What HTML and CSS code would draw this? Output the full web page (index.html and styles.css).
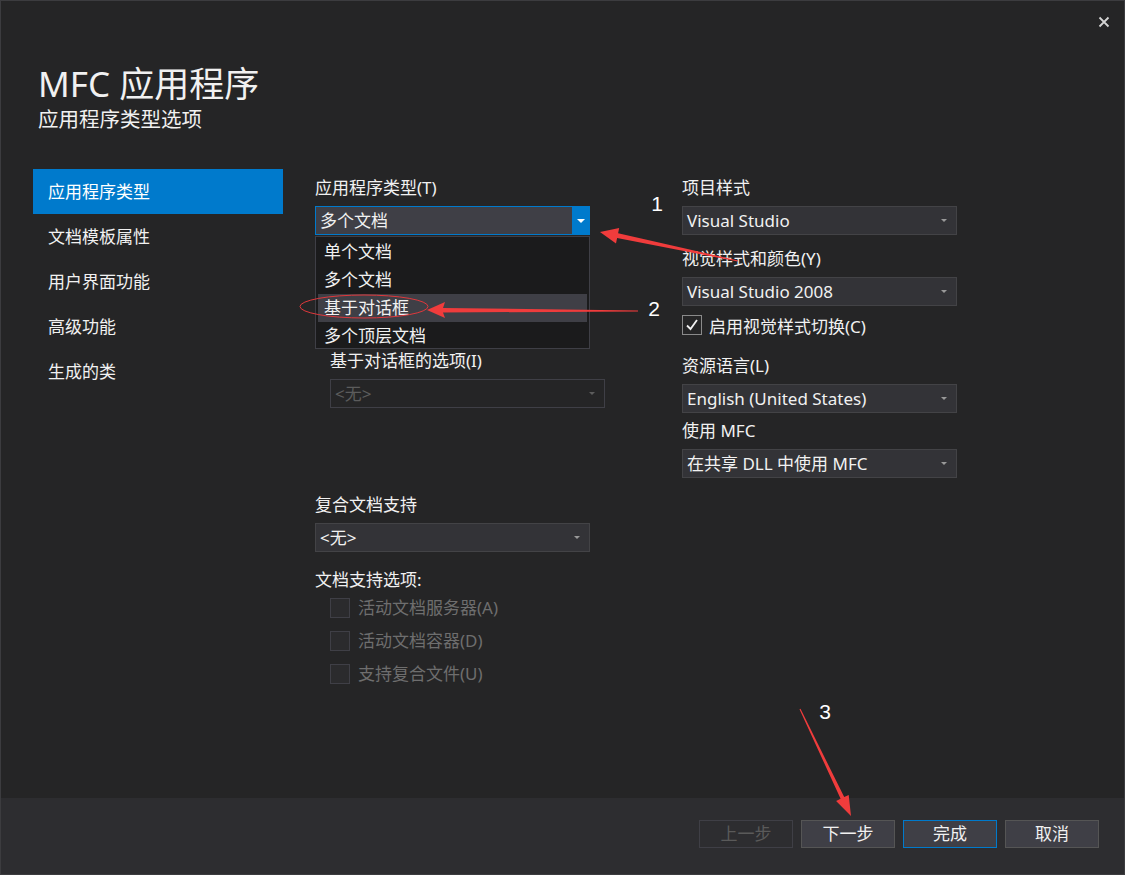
FILE: index.html
```html
<!DOCTYPE html>
<html lang="zh-CN">
<head>
    <meta charset="UTF-8">
    <title>MFC 应用程序</title>
    <link rel="stylesheet" href="styles.css">
</head>
<body>
    <div class="dialog">
        <div class="titlebar">
            <button class="close" title="关闭">
                <svg viewBox="0 0 12 12" width="12" height="12">
                    <path d="M1.5 1.5 L10.5 10.5 M10.5 1.5 L1.5 10.5" stroke="#d4d4d4" stroke-width="1.8"/>
                </svg>
            </button>
        </div>

        <div class="heading">
            <h1>MFC 应用程序</h1>
            <h2>应用程序类型选项</h2>
        </div>

        <div class="main">
            <ul class="nav">
                <li class="active">应用程序类型</li>
                <li>文档模板属性</li>
                <li>用户界面功能</li>
                <li>高级功能</li>
                <li>生成的类</li>
            </ul>

            <div class="content">
                <div class="col col-left">
                    <div class="label">应用程序类型(T)</div>
                    <div class="combo-wrap">
                        <div class="combo open">
                            <span>多个文档</span>
                            <span class="drop-btn"><i class="tri"></i></span>
                        </div>
                        <ul class="droplist">
                            <li>单个文档</li>
                            <li>多个文档</li>
                            <li class="hover">基于对话框</li>
                            <li>多个顶层文档</li>
                        </ul>
                    </div>

                    <div class="indent">
                        <div class="label gap-dialog">基于对话框的选项(I)</div>
                        <div class="combo disabled">
                            <span>&lt;无&gt;</span>
                            <i class="tri"></i>
                        </div>
                    </div>

                    <div class="label gap-compound">复合文档支持</div>
                    <div class="combo">
                        <span>&lt;无&gt;</span>
                        <i class="tri"></i>
                    </div>

                    <div class="label gap-docopts">文档支持选项:</div>
                    <div class="indent checks">
                        <label class="check disabled"><span class="box"></span>活动文档服务器(A)</label>
                        <label class="check disabled"><span class="box"></span>活动文档容器(D)</label>
                        <label class="check disabled"><span class="box"></span>支持复合文件(U)</label>
                    </div>
                </div>

                <div class="col col-right">
                    <div class="label">项目样式</div>
                    <div class="combo">
                        <span>Visual Studio</span>
                        <i class="tri"></i>
                    </div>

                    <div class="label gap-13">视觉样式和颜色(Y)</div>
                    <div class="combo">
                        <span>Visual Studio 2008</span>
                        <i class="tri"></i>
                    </div>

                    <label class="check checked gap-9">
                        <span class="box">
                            <svg viewBox="0 0 18 18" width="18" height="18">
                                <path d="M4 9.5 L7.5 13 L14 4" fill="none" stroke="#f1f1f1" stroke-width="1.8"/>
                            </svg>
                        </span><span class="check-text">启用视觉样式切换(C)</span>
                    </label>

                    <div class="label gap-20">资源语言(L)</div>
                    <div class="combo">
                        <span>English (United States)</span>
                        <i class="tri"></i>
                    </div>

                    <div class="label gap-7">使用 MFC</div>
                    <div class="combo">
                        <span>在共享 DLL 中使用 MFC</span>
                        <i class="tri"></i>
                    </div>
                </div>
            </div>
        </div>

        <div class="footer">
            <button class="btn" disabled>上一步</button>
            <button class="btn">下一步</button>
            <button class="btn primary">完成</button>
            <button class="btn">取消</button>
        </div>

        <!-- Red annotations drawn on top of the screenshot -->
        <svg class="notes" viewBox="0 0 1125 875" width="1125" height="875">
            <polygon points="738.1,260.5 618.1,233.3 619.2,227.9 600,232 616,243.5 617.1,238.1 737.9,261.5"/>
            <polygon points="638,310.4 443,308 445,302 427,310 445,318 443,312.5 638,311.4"/>
            <polygon points="799.5,709.2 840.6,798.8 836.1,800.9 851,816 848.7,794.9 844.2,797 800.5,708.8"/>
            <ellipse cx="364" cy="306.5" rx="64" ry="11.5" fill="none" stroke="#e0383c" stroke-width="1"/>
            <text x="657" y="211">1</text>
            <text x="654" y="316">2</text>
            <text x="825" y="719">3</text>
        </svg>
    </div>
</body>
</html>
```

FILE: styles.css
```css
body {
    margin: 0;
    background: #252526;
    font-family: "Noto Sans", "Noto Sans CJK SC", sans-serif;
    color: #f1f1f1;
    overflow: hidden;
}
.dialog {
    position: relative;
    width: 1125px;
    height: 875px;
    box-sizing: border-box;
    border: 1px solid #3c3c3f;
    background: #252526;
    display: flex;
    flex-direction: column;
}

/* Title bar and heading */
.titlebar {
    height: 42px;
    display: flex;
    justify-content: flex-end;
    align-items: center;
    padding-right: 14px;
}
.close {
    width: 12px;
    height: 12px;
    padding: 0;
    border: 0;
    background: none;
    display: flex;
}
.heading {
    padding: 21px 0 0 37px;
}
h1 {
    margin: 0;
    font-size: 35px;
    line-height: 40px;
    font-weight: normal;
    color: #f1f1f1;
}
h2 {
    margin: 2px 0 0;
    font-size: 20.5px;
    line-height: 26px;
    font-weight: normal;
    color: #f1f1f1;
}

/* Body: nav + form */
.main {
    display: flex;
    padding-left: 32px;
    margin-top: 37px;
}
.nav {
    list-style: none;
    margin: 0;
    padding: 0;
    width: 250px;
}
.nav li {
    height: 45px;
    line-height: 45px;
    padding-left: 15px;
    font-size: 17px;
}
.nav li.active {
    background: #007acc;
    color: #fff;
}
.content {
    display: flex;
    margin-left: 32px;
    padding-top: 8px;
    font-size: 17px;
}
.col-left {
    width: 367px;
}
.col-right {
    width: 275px;
}
.label {
    line-height: 22px;
    margin-bottom: 7px;
}
.gap-dialog { margin-top: 115px; }
.gap-compound { margin-top: 86px; }
.gap-docopts { margin-top: 17px; }
.gap-13 { margin-top: 13px; }
.gap-9 { margin-top: 9px; }
.gap-20 { margin-top: 20px; }
.gap-7 { margin-top: 7px; }
.indent {
    padding-left: 15px;
}

/* Combo boxes */
.combo {
    width: 275px;
    height: 29px;
    box-sizing: border-box;
    border: 1px solid #434346;
    background: #333337;
    display: flex;
    align-items: center;
    justify-content: space-between;
    padding: 0 9px 0 4px;
    line-height: 27px;
    white-space: nowrap;
}
.tri {
    width: 0;
    height: 0;
    border-left: 3px solid transparent;
    border-right: 3px solid transparent;
    border-top: 3px solid #999999;
}
.combo.open {
    border-color: #007acc;
    background: #3f3f46;
    padding-right: 0;
}
.drop-btn {
    width: 17px;
    height: 27px;
    background: #007acc;
    display: flex;
    align-items: center;
    justify-content: center;
}
.drop-btn .tri {
    border-top-color: #ffffff;
    border-left-width: 4px;
    border-right-width: 4px;
    border-top-width: 4px;
}
.combo.disabled {
    background: #252526;
    border-color: #3f3f46;
    color: #5c5c5c;
}
.combo.disabled .tri {
    border-top-color: #5c5c5c;
}
.combo-wrap {
    position: relative;
    width: 275px;
}
.droplist {
    position: absolute;
    left: 0;
    top: 30px;
    width: 275px;
    box-sizing: border-box;
    margin: 0;
    padding: 1px 2px 0;
    list-style: none;
    background: #1b1b1c;
    border: 1px solid #3f3f46;
    height: 113px;
    z-index: 2;
}
.droplist li {
    height: 28px;
    line-height: 28px;
    padding-left: 6px;
}
.droplist li.hover {
    background: #3f3f46;
}

/* Check boxes */
.check {
    display: flex;
    align-items: center;
    height: 20px;
    line-height: 20px;
}
.box {
    width: 20px;
    height: 20px;
    box-sizing: border-box;
    border: 1px solid #3f3f46;
    background: #2b2b2d;
    margin-right: 8px;
    display: flex;
    align-items: center;
    justify-content: center;
    flex-shrink: 0;
}
.check.checked .box {
    border-color: #8a8a8a;
    background: #252526;
    margin-right: 7px;
}
.check-text {
    position: relative;
    top: 2px;
}
.check.disabled {
    color: #6e6e6e;
}
.checks {
    display: flex;
    flex-direction: column;
    gap: 13px;
    margin-top: 7px;
}

/* Footer buttons */
.footer {
    margin-top: auto;
    height: 76px;
    box-sizing: border-box;
    background: #2d2d30;
    display: flex;
    justify-content: flex-end;
    align-items: flex-start;
    gap: 8px;
    padding: 22px 25px 0 0;
}
.btn {
    width: 94px;
    height: 28px;
    box-sizing: border-box;
    border: 1px solid #555555;
    background: #3f3f46;
    color: #f1f1f1;
    font-family: "Noto Sans", "Noto Sans CJK SC", sans-serif;
    font-size: 17px;
    line-height: 26px;
    padding: 0;
}
.btn:disabled {
    background: #2d2d30;
    border-color: #3f3f46;
    color: #5a5a5a;
}
.btn.primary {
    border-color: #007acc;
}

/* Annotation layer */
.notes {
    position: absolute;
    left: -1px;
    top: -1px;
    pointer-events: none;
    z-index: 5;
}
.notes polygon {
    fill: #f03c3c;
}
.notes text {
    fill: #ffffff;
    font-family: "Liberation Sans", Arial, sans-serif;
    font-size: 21px;
    text-anchor: middle;
}
```
